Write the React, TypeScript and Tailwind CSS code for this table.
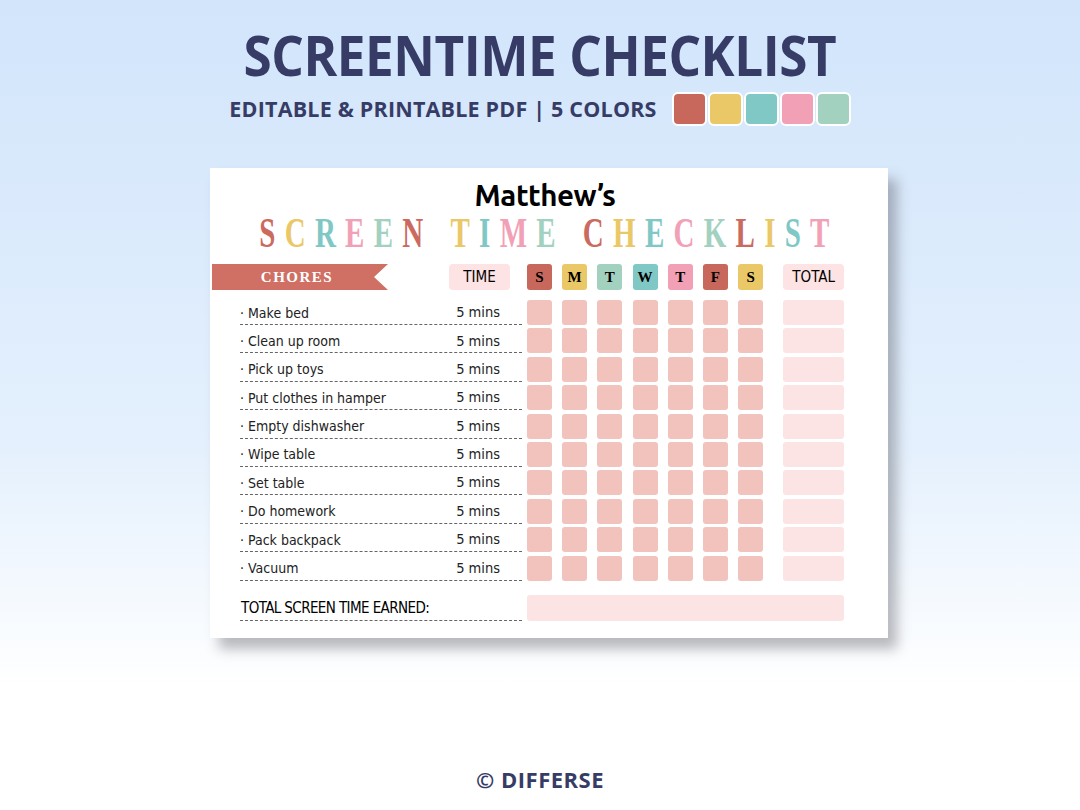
import React from "react";

const chores = [
  "Make bed",
  "Clean up room",
  "Pick up toys",
  "Put clothes in hamper",
  "Empty dishwasher",
  "Wipe table",
  "Set table",
  "Do homework",
  "Pack backpack",
  "Vacuum",
];

const days = [
  { d: "S", c: "bg-[#c8685c]" },
  { d: "M", c: "bg-[#ebc867]" },
  { d: "T", c: "bg-[#a3d1bf]" },
  { d: "W", c: "bg-[#80c8c5]" },
  { d: "T", c: "bg-[#f2a0b6]" },
  { d: "F", c: "bg-[#c8685c]" },
  { d: "S", c: "bg-[#ebc867]" },
];

const cycle = ["text-[#cb6a5f]", "text-[#ebc867]", "text-[#80c8c5]", "text-[#f2a0b6]", "text-[#a3d1bf]"];

const swatches = ["bg-[#c8685c]", "bg-[#ebc867]", "bg-[#80c8c5]", "bg-[#f2a0b6]", "bg-[#a3d1bf]"];

const narrow = "font-['Liberation_Sans_Narrow','DejaVu_Sans_Condensed','Roboto',sans-serif]";

function Title() {
  let i = 0;
  return (
    <div className="flex justify-center gap-[26px] font-['Liberation_Serif',serif] font-bold text-[42px] leading-none tracking-[0.32em] scale-x-[0.69]">
      {["SCREEN", "TIME", "CHECKLIST"].map((w) => (
        <span key={w}>
          {w.split("").map((ch, k) => {
            const cls = cycle[i % 5];
            i++;
            return (
              <span key={k} className={cls}>
                {ch}
              </span>
            );
          })}
        </span>
      ))}
    </div>
  );
}

export default function App() {
  return (
    <div className="w-[1080px] h-[810px] overflow-hidden bg-linear-to-b from-[#d2e5fb] via-[#e4f0fd] via-55% to-white to-85% flex flex-col items-center font-['Open_Sans',sans-serif] text-[#363c66]">
      <h1 className="mt-[22px] text-[56px] leading-[64px] font-bold tracking-[-0.5px] scale-x-[0.915]">SCREENTIME CHECKLIST</h1>
      <div className="mt-[6px] flex items-center gap-[15px]">
        <span className="text-[21.5px] font-bold tracking-[0.2px]">EDITABLE &amp; PRINTABLE PDF | 5 COLORS</span>
        <div className="flex gap-[1px]">
          {swatches.map((s, k) => (
            <div key={k} className={`w-[35px] h-[34px] rounded-[6px] border-2 border-white ${s}`} />
          ))}
        </div>
      </div>

      <div className="self-start ml-[210px] mt-[42px] w-[678px] h-[470px] bg-white shadow-[9px_11px_12px_rgba(60,60,70,0.35)] flex flex-col">
        <div className="mt-[10px] text-center text-black text-[29.5px] leading-[36px] font-['Ubuntu','Open_Sans',sans-serif] font-semibold tracking-[-0.5px] pr-[8px]">
          Matthew’s
        </div>
        <div className="-mt-[2px]">
          <Title />
        </div>

        <div className="mt-[10px] flex items-center h-[26px]">
          <div className="ml-[2px] w-[176px] h-[26px] bg-[#d06f64] [clip-path:polygon(0_0,100%_0,calc(100%-14px)_50%,100%_100%,0_100%)] flex items-center justify-center pl-[2px] pr-[8px]">
            <span className="text-white font-['Liberation_Serif',serif] font-bold text-[15px] tracking-[1.5px]">CHORES</span>
          </div>
          <div className={`ml-[61px] w-[61px] h-[26px] rounded-[4px] bg-[#fde3e3] flex items-center justify-center text-black text-[15px] ${narrow}`}>
            TIME
          </div>
          <div className="ml-[17px] flex gap-[10.2px]">
            {days.map((x, k) => (
              <div
                key={k}
                className={`w-[25px] h-[26px] rounded-[3px] ${x.c} flex items-center justify-center text-black font-['Liberation_Serif',serif] font-bold text-[15px]`}
              >
                {x.d}
              </div>
            ))}
          </div>
          <div className={`ml-[20px] w-[61px] h-[26px] rounded-[4px] bg-[#fde3e3] flex items-center justify-center text-black text-[15px] ${narrow}`}>
            TOTAL
          </div>
        </div>

        <div className="mt-[10px] flex flex-col gap-[3.4px]">
          {chores.map((c) => (
            <div key={c} className="flex h-[25px]">
              <div className={`ml-[30px] w-[282px] border-b border-dashed border-[#666] flex items-center justify-between pr-[22px] pt-[2px] text-[14px] text-[#222] ${narrow}`}>
                <span>· {c}</span>
                <span className="text-[14.5px]">5 mins</span>
              </div>
              <div className="ml-[5px] flex gap-[10.2px]">
                {days.map((_, k) => (
                  <div key={k} className="w-[25px] h-[25px] rounded-[3px] bg-[#f1c3bc]" />
                ))}
              </div>
              <div className="ml-[20px] w-[61px] h-[25px] rounded-[3px] bg-[#fde4e4]" />
            </div>
          ))}
        </div>

        <div className="mt-[14px] flex h-[26px]">
          <div className={`ml-[30px] w-[282px] border-b border-dashed border-[#666] flex items-center pl-[1px] pt-[3px] text-[15px] text-black font-normal tracking-[-0.6px] ${narrow}`}>
            TOTAL SCREEN TIME EARNED:
          </div>
          <div className="ml-[5px] w-[317px] h-[26px] rounded-[3px] bg-[#fde4e4]" />
        </div>
      </div>

      <div className="mt-[125px] text-[22px] font-bold tracking-[0.5px]">© DIFFERSE</div>
    </div>
  );
}
